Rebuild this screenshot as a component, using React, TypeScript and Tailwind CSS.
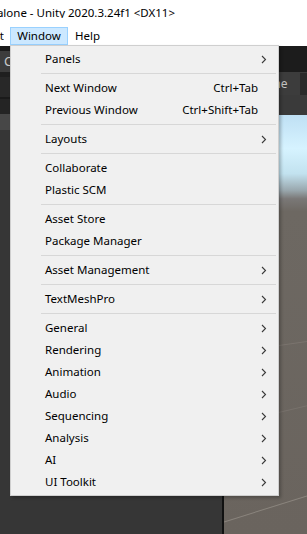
import React from "react";

type Entry =
  | { kind: "item"; label: string; shortcut?: string; sub?: boolean }
  | { kind: "sep" };

const entries: Entry[] = [
  { kind: "item", label: "Panels", sub: true },
  { kind: "sep" },
  { kind: "item", label: "Next Window", shortcut: "Ctrl+Tab" },
  { kind: "item", label: "Previous Window", shortcut: "Ctrl+Shift+Tab" },
  { kind: "sep" },
  { kind: "item", label: "Layouts", sub: true },
  { kind: "sep" },
  { kind: "item", label: "Collaborate" },
  { kind: "item", label: "Plastic SCM" },
  { kind: "sep" },
  { kind: "item", label: "Asset Store" },
  { kind: "item", label: "Package Manager" },
  { kind: "sep" },
  { kind: "item", label: "Asset Management", sub: true },
  { kind: "sep" },
  { kind: "item", label: "TextMeshPro", sub: true },
  { kind: "sep" },
  { kind: "item", label: "General", sub: true },
  { kind: "item", label: "Rendering", sub: true },
  { kind: "item", label: "Animation", sub: true },
  { kind: "item", label: "Audio", sub: true },
  { kind: "item", label: "Sequencing", sub: true },
  { kind: "item", label: "Analysis", sub: true },
  { kind: "item", label: "AI", sub: true },
  { kind: "item", label: "UI Toolkit", sub: true },
];

function Chevron() {
  return (
    <svg width="6" height="9" viewBox="0 0 6 9" className="shrink-0">
      <polyline points="1,1 4.5,4.5 1,8" fill="none" stroke="#3a3a3a" strokeWidth="1.1" />
    </svg>
  );
}

function WindowMenu() {
  return (
    <div className="absolute left-[10px] top-[45px] w-[269px] bg-[#f0f0f0] border border-[#cfcfcf] py-[2px] shadow-[2px_2px_3px_rgba(0,0,0,0.25)]">
      {entries.map((e, i) =>
        e.kind === "sep" ? (
          // separator line
          <div key={i} className="h-[7px] flex items-center pl-[30px] pr-[2px]">
            <div className="h-px w-full bg-[#d7d7d7]" />
          </div>
        ) : (
          <div key={i} className="h-[22px] flex items-center pl-[34px] pr-[11px] text-black">
            <span className="flex-1">{e.label}</span>
            {e.shortcut && <span className="mr-[9px]">{e.shortcut}</span>}
            {e.sub && <Chevron />}
          </div>
        )
      )}
    </div>
  );
}

export default function App() {
  return (
    <div className="relative w-[307px] h-[534px] overflow-hidden font-['Noto_Sans',sans-serif] text-[11.5px] leading-none">
      {/* Title bar - window title is clipped at the left edge */}
      <div className="h-[25px] bg-white flex items-center">
        <div className="w-[175px] flex justify-end overflow-hidden whitespace-nowrap">
          <span className="shrink-0 text-black">Standalone - Unity 2020.3.24f1 &lt;DX11&gt;</span>
        </div>
      </div>

      {/* Menu bar */}
      <div className="h-[21px] bg-white flex items-start whitespace-nowrap">
        <div className="w-[4px] mt-[5px] flex justify-end overflow-hidden">
          <span className="shrink-0 text-black">Component</span>
        </div>
        <div className="ml-[6px] mt-[2px] h-[18px] w-[58px] flex items-center justify-center bg-[#cce8ff] border border-[#99d1ff] text-black">
          Window
        </div>
        <span className="ml-[7px] mt-[5px] text-black">Help</span>
      </div>

      {/* Editor */}
      <div className="flex h-[488px]">
        {/* Left panel */}
        <div className="w-[222px] flex flex-col">
          <div className="h-[5px] bg-[#1a1a1a]" />
          <div className="h-[21px] bg-[#3c3c3c] flex items-center pl-[4px] text-[#c8c8c8] text-[13px]">C</div>
          <div className="h-[5px] bg-[#1f1f1f]" />
          <div className="h-[20px] bg-[#282828]" />
          <div className="h-[2px] bg-[#1a1a1a]" />
          <div className="h-[15px] bg-[#242424]" />
          <div className="h-[16px] bg-[#474747]" />
          <div className="flex-1 bg-[#363636]" />
        </div>
        <div className="w-[2px] bg-[#111111]" />
        {/* Scene view */}
        <div className="flex-1 flex flex-col">
          <div className="h-[26px] bg-[#1c1c1c]" />
          <div className="h-[23px] bg-[#3c3c3c] flex items-center">
            <span className="pl-[30px] text-[#c4c4c4] text-[12px]">Game</span>
            <div className="ml-auto w-[7px] h-[22px] bg-[#2a2a2a]" />
          </div>
          <div className="h-[20px] bg-[#3a3a3a]" />
          <div className="relative flex-1 bg-[linear-gradient(to_bottom,#bfe0f4_0%,#d6f3ff_8%,#c2e2ef_14%,#99a7ad_18%,#7a7877_20%,#6d6862_23%,#6a645e_100%)]">
            <svg className="absolute inset-0 w-full h-full" viewBox="0 0 81 418" preserveAspectRatio="none">
              <line x1="0" y1="406" x2="81" y2="380" stroke="#8a847d" strokeWidth="1" />
              <line x1="40" y1="232" x2="81" y2="226" stroke="#7a746e" strokeWidth="1" />
              <line x1="40" y1="300" x2="81" y2="290" stroke="#77716b" strokeWidth="1" />
            </svg>
          </div>
        </div>
      </div>

      <WindowMenu />
    </div>
  );
}
